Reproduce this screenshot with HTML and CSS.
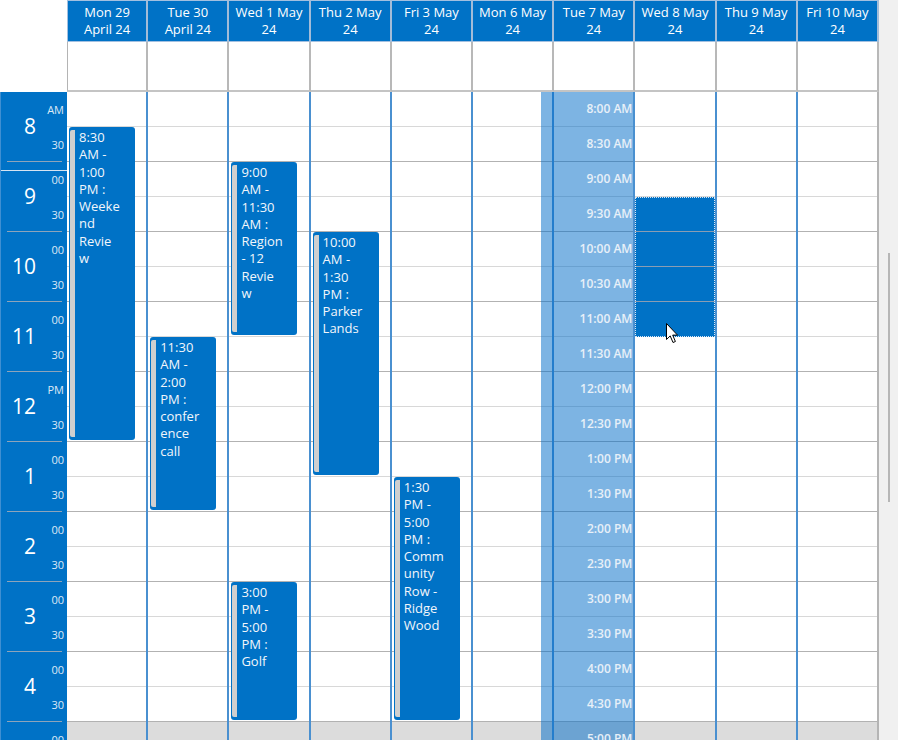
FILE: index.html
```html
<!DOCTYPE html>
<html>
<head>
<meta charset="utf-8">
<link rel="stylesheet" href="styles.css">
</head>
<body>
<div class="app">
  <div class="main">
    <div class="row head">
      <div class="corner"></div>
      <div class="hcell first">Mon 29<br>April 24</div>
      <div class="hcell">Tue 30<br>April 24</div>
      <div class="hcell">Wed 1 May<br>24</div>
      <div class="hcell">Thu 2 May<br>24</div>
      <div class="hcell">Fri 3 May<br>24</div>
      <div class="hcell">Mon 6 May<br>24</div>
      <div class="hcell">Tue 7 May<br>24</div>
      <div class="hcell">Wed 8 May<br>24</div>
      <div class="hcell">Thu 9 May<br>24</div>
      <div class="hcell">Fri 10 May<br>24</div>
    </div>
    <div class="row allday">
      <div class="corner"></div>
      <div class="acell first"></div>
      <div class="acell"></div>
      <div class="acell"></div>
      <div class="acell"></div>
      <div class="acell"></div>
      <div class="acell"></div>
      <div class="acell"></div>
      <div class="acell"></div>
      <div class="acell"></div>
      <div class="acell"></div>
    </div>
    <div class="row body">
      <div class="ruler">
        <div class="now"></div>
        <div class="hour"><span class="num">8</span><span class="lbl">AM</span><span class="lbl">30</span></div>
        <div class="hour"><span class="num">9</span><span class="lbl">00</span><span class="lbl">30</span></div>
        <div class="hour"><span class="num">10</span><span class="lbl">00</span><span class="lbl">30</span></div>
        <div class="hour"><span class="num">11</span><span class="lbl">00</span><span class="lbl">30</span></div>
        <div class="hour"><span class="num">12</span><span class="lbl">PM</span><span class="lbl">30</span></div>
        <div class="hour"><span class="num">1</span><span class="lbl">00</span><span class="lbl">30</span></div>
        <div class="hour"><span class="num">2</span><span class="lbl">00</span><span class="lbl">30</span></div>
        <div class="hour"><span class="num">3</span><span class="lbl">00</span><span class="lbl">30</span></div>
        <div class="hour"><span class="num">4</span><span class="lbl">00</span><span class="lbl">30</span></div>
        <div class="hour"><span class="num">5</span><span class="lbl">00</span><span class="lbl">30</span></div>
      </div>

      <div class="day">
        <div class="event" style="top:35px;height:313px">8:30<br>AM -<br>1:00<br>PM :<br>Weeke<br>nd<br>Revie<br>w</div>
      </div>
      <div class="day">
        <div class="event" style="top:245px;height:173px">11:30<br>AM -<br>2:00<br>PM :<br>confer<br>ence<br>call</div>
      </div>
      <div class="day">
        <div class="event" style="top:70px;height:173px">9:00<br>AM -<br>11:30<br>AM :<br>Region<br>- 12<br>Revie<br>w</div>
        <div class="event" style="top:490px;height:138px">3:00<br>PM -<br>5:00<br>PM :<br>Golf</div>
      </div>
      <div class="day">
        <div class="event" style="top:140px;height:243px">10:00<br>AM -<br>1:30<br>PM :<br>Parker<br>Lands</div>
      </div>
      <div class="day">
        <div class="event" style="top:385px;height:243px">1:30<br>PM -<br>5:00<br>PM :<br>Comm<br>unity<br>Row -<br>Ridge<br>Wood</div>
      </div>
      <div class="day"></div>
      <div class="day today">
        <div class="tl">8:00 AM</div>
        <div class="tl">8:30 AM</div>
        <div class="tl">9:00 AM</div>
        <div class="tl">9:30 AM</div>
        <div class="tl">10:00 AM</div>
        <div class="tl">10:30 AM</div>
        <div class="tl">11:00 AM</div>
        <div class="tl">11:30 AM</div>
        <div class="tl">12:00 PM</div>
        <div class="tl">12:30 PM</div>
        <div class="tl">1:00 PM</div>
        <div class="tl">1:30 PM</div>
        <div class="tl">2:00 PM</div>
        <div class="tl">2:30 PM</div>
        <div class="tl">3:00 PM</div>
        <div class="tl">3:30 PM</div>
        <div class="tl">4:00 PM</div>
        <div class="tl">4:30 PM</div>
        <div class="tl">5:00 PM</div>
      </div>
      <div class="day">
        <div class="sel" style="top:105px;height:140px"></div>
        <svg class="cursor" width="13" height="21" viewBox="0 0 13 21"><path d="M0.5 0.5 L0.5 16.5 L4.2 12.9 L7 19.5 L9.4 18.5 L6.7 12.1 L11.5 12.1 Z" fill="#fff" stroke="#000" stroke-width="1" stroke-linejoin="miter"/></svg>
      </div>
      <div class="day"></div>
      <div class="day last"></div>
    </div>
  </div>
  <div class="scrollbar"><div class="thumb"></div></div>
</div>
</body>
</html>
```
FILE: styles.css
```css
html, body {
  margin: 0;
  padding: 0;
}
body {
  width: 898px;
  height: 740px;
  overflow: hidden;
  background: #ffffff;
  font-family: "Open Sans", "Noto Sans", "DejaVu Sans", sans-serif;
}
.app {
  display: flex;
  height: 740px;
}
.main {
  width: 879px;
  display: flex;
  flex-direction: column;
}
.row {
  display: grid;
  grid-template-columns: 67px repeat(10, 1fr);
}
.head {
  height: 42px;
}
.corner {
  background: #ffffff;
}
.hcell {
  background: #0072c6;
  color: #ffffff;
  font-size: 13px;
  line-height: 17px;
  text-align: center;
  padding-top: 3px;
  box-sizing: border-box;
  border-top: 1px solid #a3c0e0;
  border-right: 2px solid #a3bcd8;
  border-bottom: 1px solid #a3c0e0;
  white-space: nowrap;
}
.hcell.first {
  border-left: 1px solid #a3c0e0;
}
.allday {
  height: 50px;
}
.acell {
  box-sizing: border-box;
  border-right: 2px solid #b8b8b8;
  border-bottom: 2px solid #c4c4c4;
  background: #ffffff;
}
.acell.first {
  border-left: 1px solid #b4b4b4;
}
.body {
  height: 648px;
  overflow: hidden;
}
.ruler {
  background: #0072c6;
  color: #ffffff;
  position: relative;
  border-left: 1px solid #3f8fd2;
}
.now {
  position: absolute;
  left: 0;
  right: 0;
  top: 78px;
  height: 1px;
  background: #d6e4f2;
}
.hour {
  height: 70px;
  box-sizing: border-box;
  margin: 0 3px 0 6px;
  display: grid;
  grid-template-columns: 1fr 24px;
  grid-template-rows: 35px 35px;
  position: relative;
}
.hour::after {
  content: "";
  position: absolute;
  left: 0;
  right: 2px;
  bottom: 0;
  height: 1px;
  background: #8ea4ba;
}
.num {
  grid-row: 1 / 3;
  grid-column: 1;
  align-self: center;
  text-align: right;
  padding-right: 4px;
  font-size: 21px;
  line-height: 1;
  margin-top: -1px;
}
.lbl {
  grid-column: 2;
  align-self: center;
  text-align: right;
  font-size: 11px;
  line-height: 13px;
  color: #dde9f5;
  margin-top: -1px;
}
.day {
  position: relative;
  border-right: 2px solid #4a90d0;
  background:
    repeating-linear-gradient(to bottom,
      transparent 0, transparent 34px,
      #d8d8d8 34px, #d8d8d8 35px,
      transparent 35px, transparent 69px,
      #b2b2b2 69px, #b2b2b2 70px),
    linear-gradient(to bottom, transparent 630px, #dcdcdc 630px);
}
.day.last {
  border-right-color: #b4b4b4;
}
.event {
  position: absolute;
  left: 2px;
  width: 66px;
  box-sizing: border-box;
  background: #0072c6;
  border-radius: 3px;
  color: #f2f6fb;
  font-size: 13px;
  line-height: 17.3px;
  padding: 2px 0 0 10px;
  overflow: hidden;
  white-space: nowrap;
  z-index: 2;
}
.event::before {
  content: "";
  position: absolute;
  left: 1px;
  top: 3px;
  bottom: 3px;
  width: 5px;
  background: #cfcfcf;
  border-radius: 2px 0 0 2px;
}
.today::before {
  content: "";
  position: absolute;
  left: -13px;
  right: 0;
  top: 0;
  bottom: 0;
  background: rgba(0, 108, 200, 0.51);
  z-index: 1;
}
.tl {
  position: relative;
  z-index: 2;
  height: 35px;
  line-height: 34px;
  text-align: right;
  padding-right: 1px;
  font-size: 12px;
  font-weight: 600;
  color: #e8f0f8;
  white-space: nowrap;
}
.sel {
  position: absolute;
  left: 0;
  right: 0;
  box-sizing: border-box;
  border: 1px dotted #dbe8f5;
  background:
    repeating-linear-gradient(to bottom,
      #0072c6 0, #0072c6 34px,
      #8a9db3 34px, #8a9db3 35px);
  background-position: 0 -1px;
}
.cursor {
  position: absolute;
  left: 31px;
  top: 231px;
  z-index: 5;
}
.scrollbar {
  flex: 1;
  background: #f0f0f0;
  padding: 253px 0 0 9px;
  box-sizing: border-box;
}
.thumb {
  width: 2px;
  height: 249px;
  background: #b6b6b6;
}
```
